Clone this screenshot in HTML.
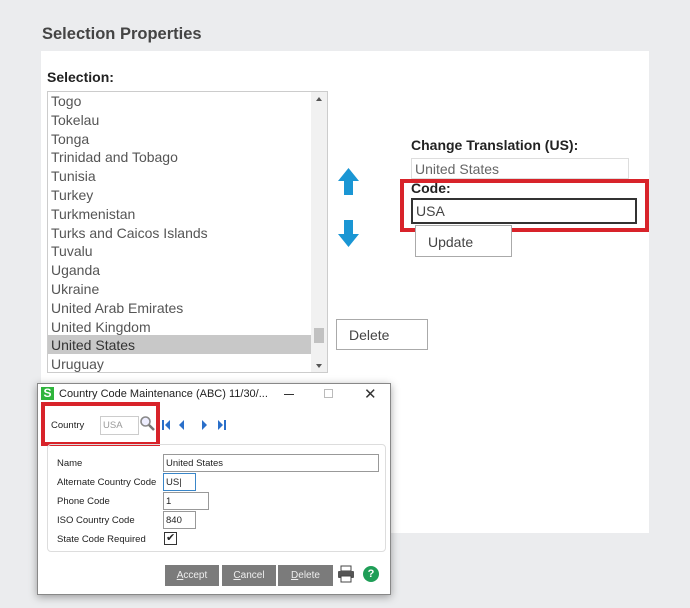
<!DOCTYPE html>
<html><head><meta charset="utf-8"><style>
*{box-sizing:border-box;margin:0;padding:0}
body{width:690px;height:608px;background:#ebecee;position:relative;overflow:hidden;font-family:"Liberation Sans",Arial,sans-serif}
.a{position:absolute}
.row{position:absolute;left:3px;font-size:14px;color:#555;line-height:18.8px;height:18.8px;width:260px;white-space:nowrap}
.btn{position:absolute;background:#fff;border:1px solid #aaa;font-size:14px;color:#444}
.lbl{position:absolute;left:19px;font-size:9.5px;color:#222}
.inp{position:absolute;left:125px;border:1px solid #999;background:#fff;font-size:9.5px;padding-left:2px;line-height:17px;color:#222}
.db{position:absolute;top:181px;height:21px;background:#7b7b7b;color:#eee;font-size:10px;text-align:center;line-height:21px;text-decoration:none}
.db u{text-decoration:underline}
</style></head><body>
<div class="a" style="left:42px;top:25px;font-size:16.5px;font-weight:bold;color:#444">Selection Properties</div>
<div class="a" style="left:41px;top:51px;width:608px;height:482px;background:#fff"></div>
<div class="a" style="left:47px;top:69px;font-size:14px;font-weight:bold;color:#222">Selection:</div>
<div class="a" style="left:47px;top:91px;width:281px;height:282px;border:1px solid #ccc;background:#fff;overflow:hidden">
 <div class="a" style="left:0;top:243px;width:263px;height:19px;background:#c8c8c8"></div>
 <div class="row" style="top:0">Togo</div><div class="row" style="top:18.8px">Tokelau</div><div class="row" style="top:37.6px">Tonga</div><div class="row" style="top:56.4px">Trinidad and Tobago</div><div class="row" style="top:75.2px">Tunisia</div><div class="row" style="top:94px">Turkey</div><div class="row" style="top:112.8px">Turkmenistan</div><div class="row" style="top:131.6px">Turks and Caicos Islands</div><div class="row" style="top:150.4px">Tuvalu</div><div class="row" style="top:169.2px">Uganda</div><div class="row" style="top:188px">Ukraine</div><div class="row" style="top:206.8px">United Arab Emirates</div><div class="row" style="top:225.6px">United Kingdom</div><div class="row" style="top:244.4px;color:#333">United States</div><div class="row" style="top:263.2px">Uruguay</div>
 <div class="a" style="left:263px;top:0;width:17px;height:280px;background:#f1f1f1"></div>
 <div class="a" style="left:266px;top:236px;width:10px;height:15px;background:#c1c1c1"></div>
 <div class="a" style="left:268px;top:5px;border:3px solid transparent;border-bottom:4px solid #555;border-top:0"></div>
 <div class="a" style="left:268px;top:272px;border:3px solid transparent;border-top:4px solid #555;border-bottom:0"></div>
</div>
<svg class="a" style="left:337px;top:167px" width="23" height="82"><path d="M11.5 1 L22 14 L16 14 L16 28 L7 28 L7 14 L1 14Z" fill="#1a96d4"/><path d="M11.5 80 L22 67 L16 67 L16 53 L7 53 L7 67 L1 67Z" fill="#1a96d4"/></svg>
<div class="a" style="left:411px;top:137px;font-size:14px;font-weight:bold;color:#222">Change Translation (US):</div>
<div class="a" style="left:411px;top:158px;width:218px;height:21px;border:1px solid #ddd;font-size:14px;color:#666;padding-left:3px;line-height:20px">United States</div>
<div class="a" style="left:400px;top:179px;width:249px;height:53px;border:4px solid #d8232a"></div>
<div class="a" style="left:411px;top:180px;font-size:14px;font-weight:bold;color:#222">Code:</div>
<div class="a" style="left:411px;top:198px;width:226px;height:26px;border:2px solid #333;font-size:14px;color:#444;padding-left:3px;line-height:22px;background:#fff">USA</div>
<div class="btn" style="left:415px;top:225px;width:97px;height:32px;padding:8px 0 0 12px">Update</div>
<div class="btn" style="left:336px;top:319px;width:92px;height:31px;padding:7px 0 0 12px">Delete</div>
<div class="a" style="left:37px;top:383px;width:354px;height:212px;background:#fff;border:1px solid #888;box-shadow:0 2px 8px rgba(0,0,0,.35)">
 <div class="a" style="left:3px;top:3px;width:13px;height:13px;background:#2fb43c;color:#fff;font-weight:bold;font-size:12px;line-height:13px;text-align:center">S</div>
 <div class="a" style="left:21px;top:4px;font-size:11px;color:#222">Country Code Maintenance (ABC) 11/30/...</div>
 <div class="a" style="left:246px;top:10px;width:10px;height:1px;background:#333"></div>
 <div class="a" style="left:286px;top:5px;width:9px;height:9px;border:1px solid #bbb"></div>
 <div class="a" style="left:326px;top:1px;font-size:15px;color:#333">✕</div>
 <div class="a" style="left:3px;top:18px;width:119px;height:44px;border:4px solid #d8232a"></div>
 <div class="a" style="left:13px;top:36px;font-size:9.5px;color:#222">Country</div>
 <div class="a" style="left:62px;top:32px;width:39px;height:19px;border:1px solid #ccc;font-size:9.5px;color:#999;padding-left:2px;line-height:17px">USA</div>
 <svg class="a" style="left:101px;top:31px" width="17" height="18"><circle cx="6.5" cy="6.5" r="4.5" fill="#eef" stroke="#888" stroke-width="1.6"/><path d="M10 10 L15 15" stroke="#777" stroke-width="2.5"/></svg>
 <svg class="a" style="left:123px;top:35px" width="70" height="12"><g fill="#2a6fc9"><rect x="1" y="1" width="2" height="10"/><path d="M9 1 L4 6 L9 11Z"/><path d="M23 1 L18 6 L23 11Z"/><path d="M41 1 L46 6 L41 11Z"/><path d="M57 1 L62 6 L57 11Z"/><rect x="63" y="1" width="2" height="10"/></g></svg>
 <div class="a" style="left:9px;top:60px;width:339px;height:108px;border:1px solid #ddd;border-radius:4px"></div>
 <div class="lbl" style="top:74px">Name</div>
 <div class="lbl" style="top:93px">Alternate Country Code</div>
 <div class="lbl" style="top:112px">Phone Code</div>
 <div class="lbl" style="top:131px">ISO Country Code</div>
 <div class="lbl" style="top:150px">State Code Required</div>
 <div class="inp" style="top:70px;width:216px;height:18px">United States</div>
 <div class="inp" style="top:89px;width:33px;height:18px;border-color:#3a86c8">US|</div>
 <div class="inp" style="top:108px;width:46px;height:18px">1</div>
 <div class="inp" style="top:127px;width:33px;height:18px">840</div>
 <div class="inp" style="top:148px;left:126px;width:13px;height:13px;border-color:#333;font-size:11px;line-height:11px;padding-left:1px">✔</div>
 <div class="db" style="left:127px;width:54px"><u>A</u>ccept</div>
 <div class="db" style="left:184px;width:54px"><u>C</u>ancel</div>
 <div class="db" style="left:240px;width:55px"><u>D</u>elete</div>
 <svg class="a" style="left:299px;top:181px" width="18" height="18"><rect x="4" y="1" width="10" height="5" fill="#fff" stroke="#444"/><rect x="1" y="6" width="16" height="7" rx="1" fill="#555"/><rect x="4" y="11" width="10" height="6" fill="#fff" stroke="#444"/></svg>
 <div class="a" style="left:325px;top:182px;width:16px;height:16px;border-radius:50%;background:#1f9e57;color:#fff;font-weight:bold;font-size:11px;text-align:center;line-height:16px">?</div>
</div>
</body></html>
